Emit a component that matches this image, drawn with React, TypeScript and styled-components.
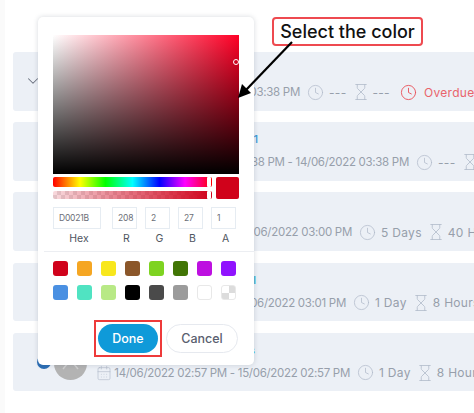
import React from 'react';
import styled, { createGlobalStyle } from 'styled-components';
import { CalendarDays, ChevronDown, Clock, Hourglass } from 'lucide-react';

const GlobalStyle = createGlobalStyle`
  html, body {
    margin: 0;
    background: #fff;
  }
  * {
    box-sizing: border-box;
  }
`;

const tasks = [
  { id: 1, left: 11, title: 'Sprint', titleWidth: 60, dates: '14/06/2022 03:38 PM - 14/06/2022 03:38 PM', days: '---', hours: '---', overdue: true, chevron: true },
  { id: 2, left: 142, title: 'Section1', titleWidth: 103, dates: '14/06/2022 03:38 PM - 14/06/2022 03:38 PM', days: '---', hours: '---' },
  { id: 3, left: 85, title: 'Design', titleWidth: 60, dates: '14/06/2022 03:00 PM - 20/06/2022 03:00 PM', days: '5 Days', hours: '40 Hours' },
  { id: 4, left: 79, title: 'Deployment Final', titleWidth: 164, color: '#22aacb', dates: '14/06/2022 03:01 PM - 15/06/2022 03:01 PM', days: '1 Day', hours: '8 Hours' },
  { id: 5, left: 24, title: 'Testing Tasks', titleWidth: 159, color: '#22aacb', dates: '14/06/2022 02:57 PM - 15/06/2022 02:57 PM', days: '1 Day', hours: '8 Hours', avatar: true },
];

const swatches = [
  '#D0021B', '#F5A623', '#F8E71C', '#8B572A', '#7ED321', '#417505', '#BD10E0', '#9013FE',
  '#4A90E2', '#50E3C2', '#B8E986', '#000000', '#4A4A4A', '#9B9B9B', '#FFFFFF', 'checker',
];

const fields = [
  { label: 'Hex', value: 'D0021B', wide: true },
  { label: 'R', value: '208' },
  { label: 'G', value: '2' },
  { label: 'B', value: '27' },
  { label: 'A', value: '1' },
];

const App = () => (
  <Page>
    <GlobalStyle />
    <TaskList>
      {tasks.map((task) => (
        <TaskRow key={task.id} $left={task.left}>
          {task.chevron && (
            <Chevron>
              <ChevronDown size={18} strokeWidth={1.4} />
            </Chevron>
          )}
          {task.avatar && (
            <>
              <StatusDot />
              <Avatar>
                <svg width="33" height="33" viewBox="0 0 33 33">
                  <circle cx="16.5" cy="16.5" r="16.5" fill="#b3b3b3" />
                  <path d="M9 22 L16.5 13 L24 22" fill="none" stroke="#cfcfcf" strokeWidth="1.5" />
                </svg>
              </Avatar>
            </>
          )}
          <TaskBody>
            <TaskTitle $width={task.titleWidth} $color={task.color}>
              {task.title}
            </TaskTitle>
            <Meta>
              <CalendarDays size={16} strokeWidth={1} />
              <DateText>{task.dates}</DateText>
              <MetaItem>
                <Clock size={17} strokeWidth={1.1} />
                {task.days}
              </MetaItem>
              <MetaItem>
                <HourglassIcon size={18} strokeWidth={1.1} />
                {task.hours}
              </MetaItem>
              {task.overdue && (
                <MetaItem $danger>
                  <Clock size={17} strokeWidth={1.3} />
                  Overdue
                </MetaItem>
              )}
            </Meta>
          </TaskBody>
        </TaskRow>
      ))}
    </TaskList>

    <Picker>
      <Saturation>
        <SatHandle />
      </Saturation>
      <Sliders>
        <SliderColumn>
          <HueBar>
            <SliderHandle />
          </HueBar>
          <AlphaBar>
            <SliderHandle />
          </AlphaBar>
        </SliderColumn>
        <CurrentColor />
      </Sliders>
      <Fields>
        {fields.map((field) => (
          <Field key={field.label} $wide={field.wide}>
            <FieldInput readOnly value={field.value} />
            <FieldLabel>{field.label}</FieldLabel>
          </Field>
        ))}
      </Fields>
      <Divider />
      <SwatchGrid>
        {swatches.map((swatch) => (
          <Swatch key={swatch} $color={swatch} />
        ))}
      </SwatchGrid>
      <Actions>
        <Highlight>
          <DoneButton>Done</DoneButton>
        </Highlight>
        <CancelButton>Cancel</CancelButton>
      </Actions>
    </Picker>

    <Callout>Select the color</Callout>
    <ArrowSvg width="60" height="60" viewBox="0 0 60 60">
      <path d="M54 1 L8 49" stroke="#000" strokeWidth="2.2" fill="none" />
      <path d="M0 57 L4 43 L13 52 Z" fill="#000" />
    </ArrowSvg>
  </Page>
);

export default App;

const Page = styled.div`
  position: relative;
  width: 474px;
  height: 413px;
  overflow: hidden;
  padding: 52px 0 0 8px;
  border-left: 5px solid #fafafa;
  background: #fff;
  font-family: Inter, 'Liberation Sans', sans-serif;
`;

const TaskList = styled.div`
  display: flex;
  flex-direction: column;
  gap: 11.6px;
`;

const TaskRow = styled.div<{ $left: number }>`
  display: flex;
  align-items: flex-start;
  width: 480px;
  height: 58.6px;
  padding-left: ${(p) => p.$left}px;
  background: #ecf0f6;
  border-radius: 3px;
  white-space: nowrap;
`;

const Chevron = styled.div`
  display: flex;
  margin: 20px 4px 0 0;
  color: #6b7280;
`;

const StatusDot = styled.div`
  flex: none;
  width: 14px;
  height: 14px;
  margin: 22px 3px 0 0;
  border-radius: 50%;
  background: #2a6db5;
`;

const Avatar = styled.div`
  display: flex;
  flex: none;
  margin: 14px 9px 0 0;
`;

const TaskBody = styled.div`
  display: flex;
  flex: none;
  flex-direction: column;
  padding-top: 9px;
`;

const TaskTitle = styled.div<{ $width: number; $color?: string }>`
  width: ${(p) => p.$width}px;
  height: 17px;
  font-size: 11px;
  line-height: 17px;
  font-weight: 500;
  text-align: right;
  color: ${(p) => p.$color || '#3d9ad6'};
`;

const Meta = styled.div`
  display: flex;
  align-items: center;
  height: 16px;
  margin-top: 6px;
  font-size: 12px;
  color: #979fab;

  svg {
    flex: none;
    color: #b3bccb;
  }
`;

/* fixed box, text pinned to its right end so the following icons keep their place */
const DateText = styled.span`
  display: flex;
  justify-content: flex-end;
  width: 236px;
  margin-left: 2px;
  font-size: 11.5px;
  letter-spacing: -0.3px;
`;

const MetaItem = styled.span<{ $danger?: boolean }>`
  display: inline-flex;
  align-items: center;
  gap: ${(p) => (p.$danger ? 7 : 5.5)}px;
  margin-left: ${(p) => (p.$danger ? 10 : 6.5)}px;
  letter-spacing: 0.3px;
  color: ${(p) => (p.$danger ? '#e9646b' : 'inherit')};

  svg {
    color: ${(p) => (p.$danger ? '#e8525a' : '#b3bccb')};
  }
`;

const HourglassIcon = styled(Hourglass)`
  margin: 0 -3px 0 -1px;
`;

const Picker = styled.div`
  position: absolute;
  left: 33px;
  top: 17px;
  width: 216px;
  height: 348px;
  padding: 18px 15px 0 15px;
  background: #fff;
  border-radius: 5px;
  box-shadow: 0 0 5px rgba(70, 80, 100, 0.22);
`;

const Saturation = styled.div`
  position: relative;
  width: 186px;
  height: 139px;
  background: linear-gradient(to top, #000, rgba(0, 0, 0, 0)),
    linear-gradient(to right, #fff, #ff0026);
`;

const SatHandle = styled.div`
  position: absolute;
  right: 0;
  top: 24px;
  width: 6px;
  height: 6px;
  border: 1.5px solid #fff;
  border-radius: 50%;
`;

const Sliders = styled.div`
  display: flex;
  gap: 4px;
  margin-top: 3px;
`;

const SliderColumn = styled.div`
  display: flex;
  flex-direction: column;
  gap: 4px;
  width: 159px;
`;

const HueBar = styled.div`
  position: relative;
  height: 10px;
  border-radius: 2px;
  background: linear-gradient(to right, #f00 0%, #ff0 17%, #0f0 33%, #0ff 50%, #00f 67%, #f0f 83%, #f00 100%);
`;

const AlphaBar = styled.div`
  position: relative;
  height: 8px;
  border-radius: 2px;
  background: linear-gradient(to right, rgba(208, 2, 27, 0.15), #d0021b),
    repeating-conic-gradient(#e6e6e6 0% 25%, #fff 0% 50%) 0 0 / 8px 8px;
`;

const SliderHandle = styled.div`
  position: absolute;
  right: 1px;
  top: 0;
  bottom: 0;
  width: 4px;
  border-radius: 1px;
  background: #fff;
`;

const CurrentColor = styled.div`
  width: 23px;
  height: 22px;
  border-radius: 2px;
  background: #d0021b;
`;

const Fields = styled.div`
  display: flex;
  gap: 8px;
  margin-top: 8px;
`;

const Field = styled.div<{ $wide?: boolean }>`
  display: flex;
  flex-direction: column;
  align-items: center;
  width: ${(p) => (p.$wide ? 48 : 25)}px;
  margin-right: ${(p) => (p.$wide ? 3 : 0)}px;
`;

const FieldInput = styled.input`
  width: 100%;
  height: 22px;
  padding: 0 0 0 5px;
  border: 1px solid #e6ecf2;
  outline: none;
  font-family: inherit;
  font-size: 8.5px;
  letter-spacing: -0.2px;
  color: #6c6f78;
`;

const FieldLabel = styled.div`
  margin-top: 3px;
  padding-left: 4px;
  font-size: 10.5px;
  line-height: 14px;
  color: #4f5560;
`;

const Divider = styled.div`
  height: 1px;
  margin: 5px -15px 0 -9px;
  background: #eceef2;
`;

const SwatchGrid = styled.div`
  display: grid;
  grid-template-columns: repeat(8, 15px);
  gap: 9px;
  margin-top: 9px;
`;

const Swatch = styled.div<{ $color: string }>`
  width: 15px;
  height: 15px;
  border-radius: 3px;
  border: ${(p) => (p.$color === '#FFFFFF' || p.$color === 'checker' ? '1px solid #e8e8e8' : 'none')};
  background: ${(p) =>
    p.$color === 'checker'
      ? 'repeating-conic-gradient(#dcdcdc 0% 25%, #fff 0% 50%) 0 0 / 14px 14px'
      : p.$color};
`;

const Actions = styled.div`
  display: flex;
  align-items: center;
  gap: 4px;
  margin-top: 20px;
  padding-left: 41px;
`;

const Highlight = styled.div`
  display: flex;
  padding: 2px;
  border: 2px solid #ee3a3a;
`;

const DoneButton = styled.button`
  width: 60px;
  height: 29px;
  border: none;
  border-radius: 15px;
  background: #0f9ad9;
  font-family: inherit;
  font-size: 12.5px;
  font-weight: 500;
  color: #fff;
`;

const CancelButton = styled.button`
  width: 72px;
  height: 29px;
  border: 1px solid #e6e9ef;
  border-radius: 15px;
  background: #fff;
  font-family: inherit;
  font-size: 12.5px;
  font-weight: 500;
  color: #5a5f70;
`;

const Callout = styled.div`
  position: absolute;
  left: 267px;
  top: 17px;
  display: flex;
  align-items: center;
  justify-content: center;
  width: 151px;
  height: 29px;
  border: 2px solid #ee4a50;
  border-radius: 4px;
  background: #fff;
  font-size: 18px;
  font-weight: 500;
  color: #111;
`;

const ArrowSvg = styled.svg`
  position: absolute;
  left: 233px;
  top: 41px;
`;
